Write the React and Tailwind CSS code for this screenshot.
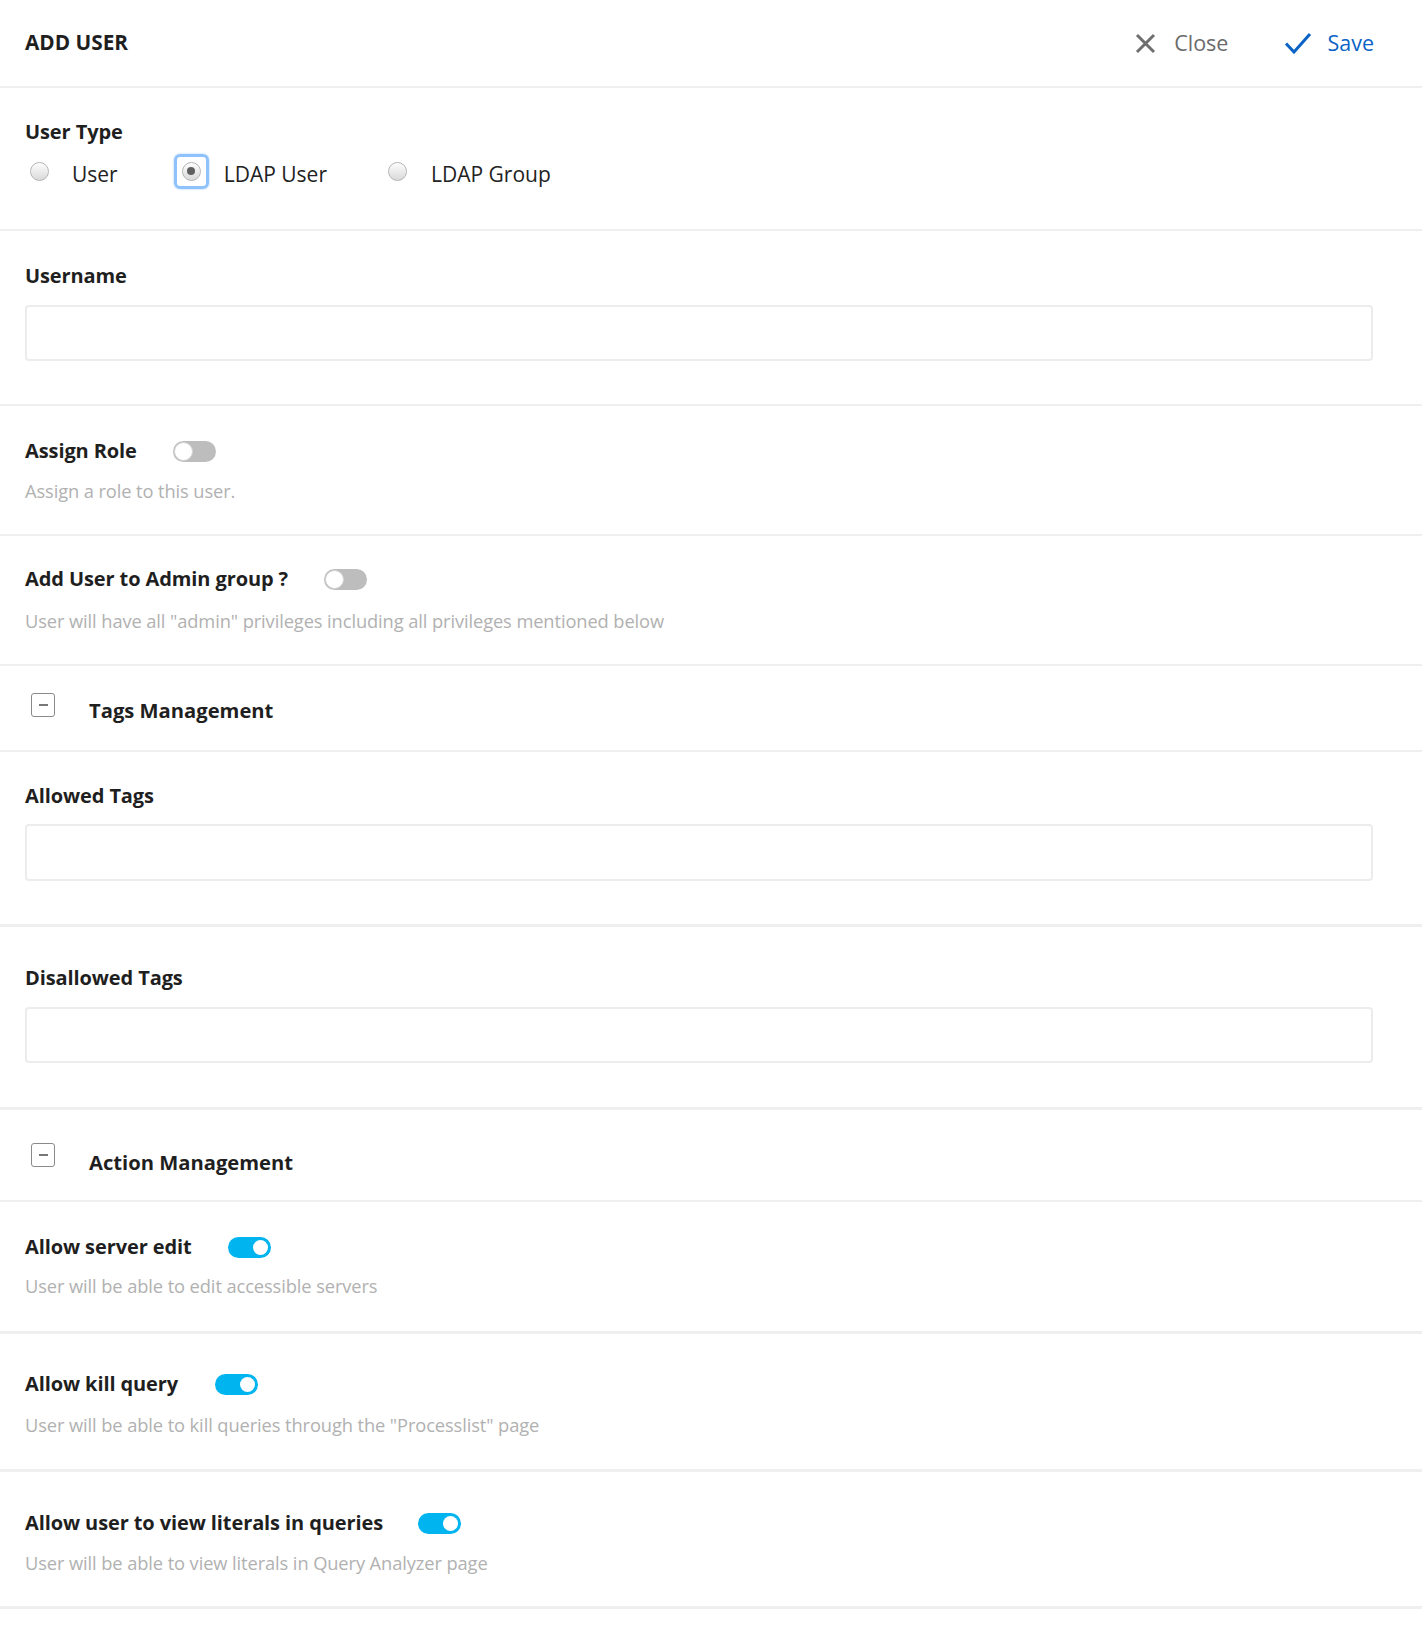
import React from "react";

const Toggle = ({ on }) =>
  on ? (
    <span className="relative block w-[43px] h-[21px] rounded-full bg-[#00b4ef] shrink-0">
      <span className="absolute right-[3px] top-[3px] w-[15px] h-[15px] rounded-full bg-white" />
    </span>
  ) : (
    <span className="relative block w-[43px] h-[21px] rounded-full bg-[#bdbdbd] shrink-0">
      <span className="absolute left-[1px] top-[1px] w-[19px] h-[19px] rounded-full bg-white border border-[#d4d4d4]" />
    </span>
  );

const MinusBox = () => (
  <span className="flex items-center justify-center w-[24px] h-[24px] rounded-[3px] border-[1.5px] border-[#8a8a8a] shrink-0">
    <span className="block w-[9px] h-[1.5px] bg-[#777]" />
  </span>
);

const Radio = ({ checked }) => (
  <span className="flex items-center justify-center w-[19px] h-[19px] rounded-full border border-[#b4b4b4] bg-[linear-gradient(#fdfdfd,#d9d9d9)] shadow-[inset_0_1px_1px_rgba(255,255,255,0.8)] shrink-0">
    {checked && <span className="block w-[8px] h-[8px] rounded-full bg-[#5f5f5f]" />}
  </span>
);

const Label = ({ children }) => (
  <div className="text-[20px] leading-6 font-bold text-[#1f1f1f] tracking-[-0.1px] whitespace-nowrap">{children}</div>
);

const Desc = ({ children, className }) => (
  <div className={"text-[18.3px] leading-6 text-[#b1b1b1] tracking-[-0.1px] " + className}>{children}</div>
);

const Input = ({ className }) => (
  <div className={"rounded-[4px] border-2 border-[#ececec] bg-white " + className} />
);

const ToggleRow = ({ label, on, gapClass }) => (
  <div className="flex items-center h-6">
    <Label>{label}</Label>
    <span className={gapClass}>
      <Toggle on={on} />
    </span>
  </div>
);

export default function App() {
  return (
    <div className="w-full bg-white font-['Open_Sans','Lato',sans-serif] text-[#222] pb-[27px]">
      {/* Header */}
      <div className="flex items-center justify-between h-[88px] border-b-2 border-[#efefef] pl-[25px] pr-[48px]">
        <div className="text-[20.8px] font-bold text-[#1f1f1f]">ADD USER</div>
        <div className="flex items-center">
          <button className="flex items-center text-[#6b6b6b]">
            <svg width="21" height="21" viewBox="0 0 21 21" className="shrink-0">
              <path d="M2 2 L19 19 M19 2 L2 19" stroke="#6f6f6f" strokeWidth="3" fill="none" />
            </svg>
            <span className="ml-[18px] text-[21.5px] leading-6">Close</span>
          </button>
          <button className="flex items-center ml-[56px] text-[#0b63c6]">
            <svg width="28" height="22" viewBox="0 0 28 22" className="shrink-0">
              <path d="M2 11.5 L10 20 L26 2" stroke="#0b63c6" strokeWidth="3" fill="none" strokeLinejoin="miter" />
            </svg>
            <span className="ml-[15px] text-[21.5px] leading-6">Save</span>
          </button>
        </div>
      </div>

      {/* User Type */}
      <div className="border-b-2 border-[#efefef] pl-[25px] pr-[49px] pt-[32px] pb-[40px]">
        <Label>User Type</Label>
        <div className="flex items-center h-[36px] mt-[9px] text-[21px] text-[#222]">
          <span className="ml-[5px]"><Radio /></span>
          <span className="ml-[23px] mt-[7px]">User</span>
          <span className="ml-[56px] flex items-center justify-center w-[35px] h-[35px] rounded-[6px] border-[3px] border-[#8fc2fb] shadow-[0_0_2px_#8fc2fb]">
            <Radio checked />
          </span>
          <span className="ml-[15px] mt-[7px]">LDAP User</span>
          <span className="ml-[61px]"><Radio /></span>
          <span className="ml-[24px] mt-[7px]">LDAP Group</span>
        </div>
      </div>

      {/* Username */}
      <div className="border-b-2 border-[#efefef] pl-[25px] pr-[49px] pt-[33px] pb-[43px]">
        <Label>Username</Label>
        <Input className="mt-[17px] h-[56px]" />
      </div>

      {/* Assign Role */}
      <div className="border-b-2 border-[#efefef] pl-[25px] pr-[49px] pt-[33px] pb-[31px]">
        <ToggleRow label="Assign Role" gapClass="ml-[36px]" />
        <Desc className="mt-[16px]">Assign a role to this user.</Desc>
      </div>

      {/* Admin group */}
      <div className="border-b-2 border-[#efefef] pl-[25px] pr-[49px] pt-[31px] pb-[31px]">
        <ToggleRow label="Add User to Admin group ?" gapClass="ml-[36px]" />
        <Desc className="mt-[18px]">User will have all "admin" privileges including all privileges mentioned below</Desc>
      </div>

      {/* Tags Management header */}
      <div className="flex items-start h-[86px] border-b-2 border-[#efefef] pl-[31px] pt-[27px]">
        <MinusBox />
        <div className="ml-[34px] mt-[5px] text-[20.2px] leading-6 font-bold text-[#1f1f1f]">Tags Management</div>
      </div>

      {/* Allowed Tags */}
      <div className="border-b-[3px] border-[#efefef] pl-[25px] pr-[49px] pt-[32px] pb-[43px]">
        <Label>Allowed Tags</Label>
        <Input className="mt-[16px] h-[57px]" />
      </div>

      {/* Disallowed Tags */}
      <div className="border-b-[3px] border-[#efefef] pl-[25px] pr-[49px] pt-[39px] pb-[44px]">
        <Label>Disallowed Tags</Label>
        <Input className="mt-[17px] h-[56px]" />
      </div>

      {/* Action Management header */}
      <div className="flex items-start h-[92px] border-b-2 border-[#efefef] pl-[31px] pt-[33px]">
        <MinusBox />
        <div className="ml-[34px] mt-[7px] text-[20.2px] leading-6 font-bold text-[#1f1f1f]">Action Management</div>
      </div>

      {/* Allow server edit */}
      <div className="border-b-[3px] border-[#efefef] pl-[25px] pr-[49px] pt-[33px] pb-[33px]">
        <ToggleRow label="Allow server edit" on gapClass="ml-[36px]" />
        <Desc className="mt-[15px]">User will be able to edit accessible servers</Desc>
      </div>

      {/* Allow kill query */}
      <div className="border-b-[3px] border-[#efefef] pl-[25px] pr-[49px] pt-[38px] pb-[32px]">
        <ToggleRow label="Allow kill query" on gapClass="ml-[37px]" />
        <Desc className="mt-[17px]">User will be able to kill queries through the "Processlist" page</Desc>
      </div>

      {/* Allow literals */}
      <div className="border-b-[3px] border-[#efefef] pl-[25px] pr-[49px] pt-[39px] pb-[31px]">
        <ToggleRow label="Allow user to view literals in queries" on gapClass="ml-[35px]" />
        <Desc className="mt-[16px]">User will be able to view literals in Query Analyzer page</Desc>
      </div>
    </div>
  );
}
